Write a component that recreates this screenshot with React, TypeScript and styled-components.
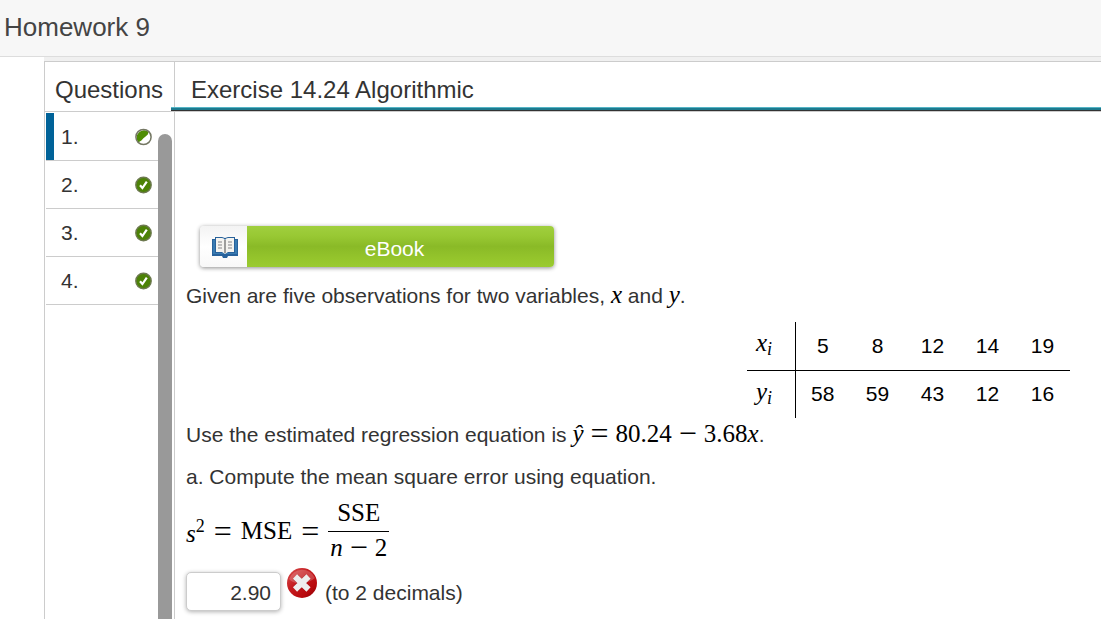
import React from 'react';
import styled, { createGlobalStyle } from 'styled-components';

const GlobalStyle = createGlobalStyle`
  *, *::before, *::after { box-sizing: border-box; }
  body {
    margin: 0;
    background: #fff;
    color: #333;
    font-family: "Liberation Sans", Arial, Helvetica, sans-serif;
    font-size: 21px;
  }
`;

const Page = styled.div`
  display: flex;
  flex-direction: column;
  height: 100vh;
  overflow: hidden;
`;

const Header = styled.header`
  flex: none;
  height: 57px;
  padding: 0 4px;
  background: #f7f7f7;
  border-bottom: 1px solid #ddd;
`;

const HeaderTitle = styled.h1`
  margin: 0;
  font-size: 26px;
  font-weight: 400;
  line-height: 54px;
  color: #444;
`;

const Workspace = styled.div`
  flex: 1;
  min-height: 0;
  display: flex;
  margin-left: 44px;
  border-top: 4px solid #f0f0f0;
`;

const Sidebar = styled.nav`
  flex: none;
  width: 131px;
  display: flex;
  flex-direction: column;
  border: 1px solid #ccc;
  border-bottom: 0;
`;

const PanelTitle = styled.h2`
  flex: none;
  margin: 0;
  height: 50px;
  padding-left: 10px;
  border-bottom: 1px solid #ccc;
  font-size: 24px;
  font-weight: 400;
  line-height: 56px;
  white-space: nowrap;
`;

const ListArea = styled.div`
  flex: 1;
  min-height: 0;
  display: flex;
  padding: 0 2px 0 1px;
`;

const QuestionList = styled.ol`
  flex: 1;
  margin: 0;
  padding: 0;
  list-style: none;
`;

const QuestionItem = styled.li`
  border-bottom: 1px solid #ccc;
  &:first-child { padding-top: 1px; }
`;

const QuestionLink = styled.a<{ $current?: boolean }>`
  display: flex;
  align-items: center;
  justify-content: space-between;
  height: 47px;
  padding: 0 6px 0 7px;
  border-left: 8px solid ${(p) => (p.$current ? '#006298' : 'transparent')};
  color: #333;
  text-decoration: none;
`;

const ScrollThumb = styled.div`
  flex: none;
  width: 14px;
  margin-top: 22px;
  border-radius: 7px 7px 0 0;
  background: #999;
`;

const Main = styled.main`
  flex: 1;
  min-width: 0;
  border-top: 1px solid #ccc;
`;

const ExerciseTitle = styled(PanelTitle)`
  position: relative;
  padding-left: 16px;
  &::after {
    content: '';
    position: absolute;
    left: -4px;
    right: 0;
    bottom: 0;
    height: 4px;
    border-top: 1px solid #54b4c6;
    border-bottom: 1px solid #333;
    background: #1d7a8e;
  }
`;

const Content = styled.div`
  padding: 114px 31px 0 11px;
`;

const EbookButton = styled.button`
  display: flex;
  width: 354px;
  height: 41px;
  margin: 0 0 12px 14px;
  padding: 0;
  border: 0;
  border-radius: 4px;
  overflow: hidden;
  background: #fafafa;
  box-shadow: 0 1px 4px rgba(0, 0, 0, 0.45);
  font: inherit;
  color: #fff;
`;

const EbookIcon = styled.span`
  flex: none;
  display: flex;
  align-items: center;
  justify-content: center;
  width: 47px;
  height: 100%;
  padding-left: 2px;
  background: linear-gradient(#f3f3f3, #fff 50%, #f8f8f8);
`;

const EbookLabel = styled.span`
  flex: 1;
  height: 100%;
  padding-right: 12px;
  line-height: 46px;
  text-align: center;
  background: linear-gradient(#a0cf3e, #98c833 25%, #8aba27 50%, #95c52c 80%, #9acb31);
`;

const Line = styled.p`
  margin: 0;
  line-height: 34px;
  white-space: nowrap;
`;

const Step = styled(Line)`
  margin-top: 8px;
`;

const MathText = styled.span`
  font-family: "Liberation Serif", "Times New Roman", serif;
  font-size: 25px;
  line-height: 24px;
  color: #000;
`;

const Variable = styled.i`
  font-family: "Liberation Serif", "Times New Roman", serif;
  font-size: 25px;
  line-height: 24px;
  color: #000;
`;

const Operator = styled.span`
  margin: 0 7px;
  font-size: 32px;
  line-height: 24px;
  vertical-align: -2px;
`;

const Small = styled.span<{ $raised?: boolean }>`
  font-size: 18px;
  line-height: 1;
  vertical-align: ${(p) => (p.$raised ? '10px' : '-4px')};
`;

const DataTable = styled.table`
  margin: 9px 0 0 auto;
  border-collapse: collapse;
  color: #000;
  font-size: 21px;
`;

const Cell = styled.td`
  width: 55px;
  height: 48px;
  padding: 0;
  text-align: center;
`;

const RowHead = styled.th`
  width: 48px;
  height: 48px;
  padding: 0 0 2px 9px;
  border-right: 1px solid #000;
  font-weight: 400;
  text-align: left;
`;

const DataRow = styled.tr`
  & + & { border-top: 1px solid #000; }
`;

const Equation = styled(MathText)`
  display: flex;
  align-items: center;
  gap: 2px;
  height: 66px;
  margin-top: 4px;
  white-space: nowrap;
`;

const Fraction = styled.span`
  display: flex;
  flex-direction: column;
  align-items: center;
`;

const Numerator = styled.span`
  width: 61px;
  height: 34px;
  border-bottom: 1px solid #000;
  line-height: 30px;
  text-align: center;
`;

const Denominator = styled.span`
  height: 32px;
  line-height: 32px;
`;

const Answer = styled.div`
  display: flex;
  align-items: flex-start;
  padding-top: 4px;
`;

const AnswerInput = styled.input`
  width: 95px;
  height: 39px;
  margin: 4px 6px 0 0;
  padding: 2px 9px 0;
  border: 1px solid #ccc;
  border-radius: 5px;
  box-shadow: 0 1px 4px rgba(0, 0, 0, 0.3);
  background: #fff;
  color: #333;
  font: inherit;
  text-align: right;
`;

const AnswerLabel = styled.label`
  margin: 8px 0 0 8px;
  line-height: 34px;
`;

function CompleteIcon() {
  return (
    <svg width="17" height="18" viewBox="0 0 17 18" role="img" aria-label="Complete">
      <circle cx="8.5" cy="9" r="7.7" fill="#4c8206" stroke="#6d7950" strokeWidth="1.4" />
      <path d="M5 9.2 7.4 12 11.8 5.6" fill="none" stroke="#fff" strokeWidth="2.2" />
    </svg>
  );
}

function PartialIcon() {
  return (
    <svg width="17" height="18" viewBox="0 0 17 18" role="img" aria-label="Partially complete">
      <circle cx="8.5" cy="9" r="7.6" fill="#fff" />
      <path d="M3.2 14.4A7.6 7.6 0 0 1 13.8 3.7L12.8 6.6 10.6 8.6 8.4 10.2 6.4 12.4Z" fill="#4f8c04" />
      <circle cx="8.5" cy="9" r="7.6" fill="none" stroke="#747763" strokeWidth="1.5" />
    </svg>
  );
}

function BookIcon() {
  return (
    <svg width="26" height="22" viewBox="0 0 26 22" aria-hidden="true">
      <path d="M0 3H3V1H10L13 2 16 1H23V3H26V20H16L15 22H11L10 20H0Z" fill="#28629b" />
      <path d="M1 4H3V17H11L13 18 15 17H23V4H25V18H1Z" fill="#397bb2" />
      <path d="M4 2H10Q12 2 13 4 14 2 16 2H22V16H16L13 18 10 16H4Z" fill="#f4f3ef" />
      <path d="M6 6H10M6 9H10M6 12H10M16 6H20M16 9H20M16 12H20" stroke="#aaa" strokeWidth="1.4" />
      <path d="M13 4V17" stroke="#777" strokeWidth="1.4" />
    </svg>
  );
}

function IncorrectIcon() {
  return (
    <svg width="30" height="30" viewBox="0 0 30 30" role="img" aria-label="Incorrect">
      <defs>
        <linearGradient id="redFace" x1="0" y1="0" x2="1" y2="1">
          <stop offset="0" stopColor="#d85050" />
          <stop offset="0.4" stopColor="#c51c20" />
          <stop offset="0.75" stopColor="#b9090d" />
          <stop offset="1" stopColor="#810005" />
        </linearGradient>
      </defs>
      <circle cx="15" cy="15" r="15" fill="url(#redFace)" />
      <path d="M2 11A14 14 0 0 1 28 10Q22 15 15 15 6 16 2 11Z" fill="#fff" opacity="0.2" />
      <path d="M8.5 9 21 21M21 9 8.5 21" stroke="#760006" strokeWidth="7" opacity="0.35" />
      <path d="M8 8.5 21.5 21.5M21.5 8.5 8 21.5" stroke="#eee" strokeWidth="6" />
    </svg>
  );
}

const questions = [1, 2, 3, 4];
const observations = [
  { name: 'x', values: [5, 8, 12, 14, 19] },
  { name: 'y', values: [58, 59, 43, 12, 16] },
];

export default function App() {
  return (
    <>
      <GlobalStyle />
      <Page>
        <Header>
          <HeaderTitle>Homework 9</HeaderTitle>
        </Header>
        <Workspace>
          <Sidebar aria-label="Questions">
            <PanelTitle>Questions</PanelTitle>
            <ListArea>
              <QuestionList>
                {questions.map((n) => (
                  <QuestionItem key={n}>
                    <QuestionLink href={`#question-${n}`} $current={n === 1}>
                      {n}.
                      {n === 1 ? <PartialIcon /> : <CompleteIcon />}
                    </QuestionLink>
                  </QuestionItem>
                ))}
              </QuestionList>
              <ScrollThumb />
            </ListArea>
          </Sidebar>
          <Main>
            <ExerciseTitle>Exercise 14.24 Algorithmic</ExerciseTitle>
            <Content>
              <EbookButton type="button">
                <EbookIcon><BookIcon /></EbookIcon>
                <EbookLabel>eBook</EbookLabel>
              </EbookButton>
              <Line>
                Given are five observations for two variables, <Variable>x</Variable> and <Variable>y</Variable>.
              </Line>
              <DataTable>
                <tbody>
                  {observations.map((row) => (
                    <DataRow key={row.name}>
                      <RowHead scope="row">
                        <Variable>{row.name}<Small>i</Small></Variable>
                      </RowHead>
                      {row.values.map((v) => <Cell key={v}>{v}</Cell>)}
                    </DataRow>
                  ))}
                </tbody>
              </DataTable>
              <Line>
                Use the estimated regression equation is{' '}
                <MathText>
                  <Variable>ŷ</Variable><Operator>=</Operator>80.24<Operator>−</Operator>3.68<Variable>x</Variable>
                </MathText>.
              </Line>
              <Step>a. Compute the mean square error using equation.</Step>
              <Equation>
                <span><Variable>s</Variable><Small $raised>2</Small></span>
                <Operator>=</Operator>
                <span>MSE</span>
                <Operator>=</Operator>
                <Fraction>
                  <Numerator>SSE</Numerator>
                  <Denominator><Variable>n</Variable><Operator>−</Operator>2</Denominator>
                </Fraction>
              </Equation>
              <Answer>
                <AnswerInput id="mse" type="text" defaultValue="2.90" />
                <IncorrectIcon />
                <AnswerLabel htmlFor="mse">(to 2 decimals)</AnswerLabel>
              </Answer>
            </Content>
          </Main>
        </Workspace>
      </Page>
    </>
  );
}
